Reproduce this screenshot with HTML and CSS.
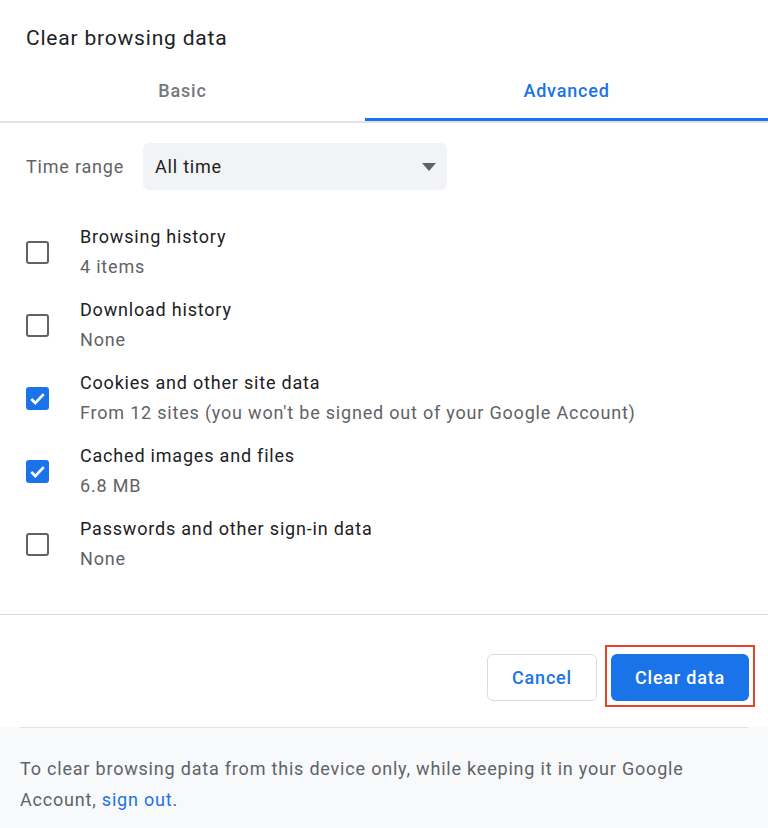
FILE: index.html
```html
<!DOCTYPE html>
<html lang="en">
<head>
    <meta charset="UTF-8">
    <meta name="viewport" content="width=device-width, initial-scale=1.0">
    <title>Clear browsing data</title>
    <link rel="stylesheet" href="styles.css">
</head>
<body>
    <div class="dialog">
        <h1 class="title">Clear browsing data</h1>

        <div class="tabs">
            <div class="tab tab-basic">Basic</div>
            <div class="tab active">Advanced</div>
        </div>

        <div class="body">
            <div class="range">
                <span class="range-label">Time range</span>
                <div class="select">
                    <span>All time</span>
                    <span class="arrow"></span>
                </div>
            </div>

            <ul class="options">
                <li class="option">
                    <span class="checkbox"></span>
                    <div class="option-text">
                        <div class="option-title">Browsing history</div>
                        <div class="option-sub">4 items</div>
                    </div>
                </li>
                <li class="option">
                    <span class="checkbox"></span>
                    <div class="option-text">
                        <div class="option-title">Download history</div>
                        <div class="option-sub">None</div>
                    </div>
                </li>
                <li class="option">
                    <span class="checkbox checked">
                        <svg viewBox="0 0 24 24"><path d="M5.5 12.5l4.2 4.2 8.8-9.2" /></svg>
                    </span>
                    <div class="option-text">
                        <div class="option-title">Cookies and other site data</div>
                        <div class="option-sub">From 12 sites (you won't be signed out of your Google Account)</div>
                    </div>
                </li>
                <li class="option">
                    <span class="checkbox checked">
                        <svg viewBox="0 0 24 24"><path d="M5.5 12.5l4.2 4.2 8.8-9.2" /></svg>
                    </span>
                    <div class="option-text">
                        <div class="option-title">Cached images and files</div>
                        <div class="option-sub">6.8 MB</div>
                    </div>
                </li>
                <li class="option">
                    <span class="checkbox"></span>
                    <div class="option-text">
                        <div class="option-title">Passwords and other sign-in data</div>
                        <div class="option-sub">None</div>
                    </div>
                </li>
            </ul>
        </div>

        <div class="actions">
            <button class="btn btn-cancel">Cancel</button>
            <button class="btn btn-primary">Clear data</button>
        </div>

        <div class="footer">
            <p>To clear browsing data from this device only, while keeping it in your Google Account, <a href="#">sign out</a>.</p>
        </div>
    </div>
</body>
</html>
```

FILE: styles.css
```css
body {
    font-family: Roboto, "Liberation Sans", Arial, sans-serif;
    letter-spacing: 0.8px;
    margin: 0;
    padding: 0;
    background-color: #fff;
    color: #202124;
}
.dialog {
    width: 768px;
    height: 828px;
    display: flex;
    flex-direction: column;
}
.title {
    margin: 0;
    padding: 24px 26px 0;
    font-size: 21px;
    font-weight: 400;
    line-height: 28px;
}
.tabs {
    display: flex;
    border-bottom: 2px solid #e3e3e3;
}
.tab {
    flex: 1;
    text-align: center;
    padding: 27px 0 15px;
    line-height: 24px;
    font-size: 18px;
    font-weight: 500;
    color: #75787c;
    border-bottom: 3px solid transparent;
}
.tab-basic {
    flex: 0 0 365px;
}
.tab.active {
    color: #1a73e8;
    border-bottom-color: #1a73e8;
}
.body {
    padding: 20px 0 33px;
    border-bottom: 1px solid #dadce0;
}
.range {
    display: flex;
    align-items: center;
    padding-left: 26px;
}
.range-label {
    width: 117px;
    font-size: 18px;
    color: #5f6368;
}
.select {
    width: 304px;
    height: 47px;
    box-sizing: border-box;
    padding: 0 11px 0 12px;
    display: flex;
    align-items: center;
    justify-content: space-between;
    background-color: #f1f3f4;
    border-radius: 6px;
    font-size: 18px;
}
.arrow {
    width: 0;
    height: 0;
    border-left: 7.5px solid transparent;
    border-right: 7.5px solid transparent;
    border-top: 8px solid #5f6368;
}
.options {
    list-style: none;
    margin: 26px 0 0;
    padding: 0;
}
.option {
    display: flex;
    align-items: center;
    padding: 6px 26px 7px;
}
.checkbox {
    width: 23px;
    height: 23px;
    box-sizing: border-box;
    border: 2.5px solid #5f6368;
    border-radius: 3px;
    margin-right: 31px;
    flex-shrink: 0;
}
.checkbox.checked {
    border: none;
    background-color: #1a73e8;
    display: flex;
}
.checkbox svg {
    width: 23px;
    height: 23px;
    fill: none;
    stroke: #fff;
    stroke-width: 2.8;
}
.option-title {
    font-size: 18px;
    line-height: 30px;
    color: #202124;
}
.option-sub {
    font-size: 18px;
    line-height: 30px;
    color: #5f6368;
}
.actions {
    display: flex;
    justify-content: flex-end;
    gap: 14px;
    padding: 39px 19px 26px;
}
.btn {
    height: 47px;
    border-radius: 6px;
    font-family: inherit;
    font-size: 18px;
    font-weight: 500;
    letter-spacing: 0.8px;
    cursor: pointer;
}
.btn-cancel {
    width: 110px;
    background-color: #fff;
    border: 1.5px solid #dadce0;
    color: #1a73e8;
}
.btn-primary {
    position: relative;
    width: 138px;
    background-color: #1a73e8;
    border: none;
    color: #fff;
}
/* red highlight box around the main action */
.btn-primary::after {
    content: "";
    position: absolute;
    top: -9px;
    left: -6px;
    right: -6px;
    bottom: -6px;
    border: 2px solid #e8412c;
}
.footer {
    flex: 1;
    background-color: #f8f9fa;
    padding: 0 20px;
}
.footer p {
    margin: 0;
    padding-top: 25px;
    border-top: 1px solid #e3e3e3;
    font-size: 18px;
    line-height: 31px;
    color: #5f6368;
}
.footer a {
    color: #1a73e8;
    text-decoration: none;
}
```
